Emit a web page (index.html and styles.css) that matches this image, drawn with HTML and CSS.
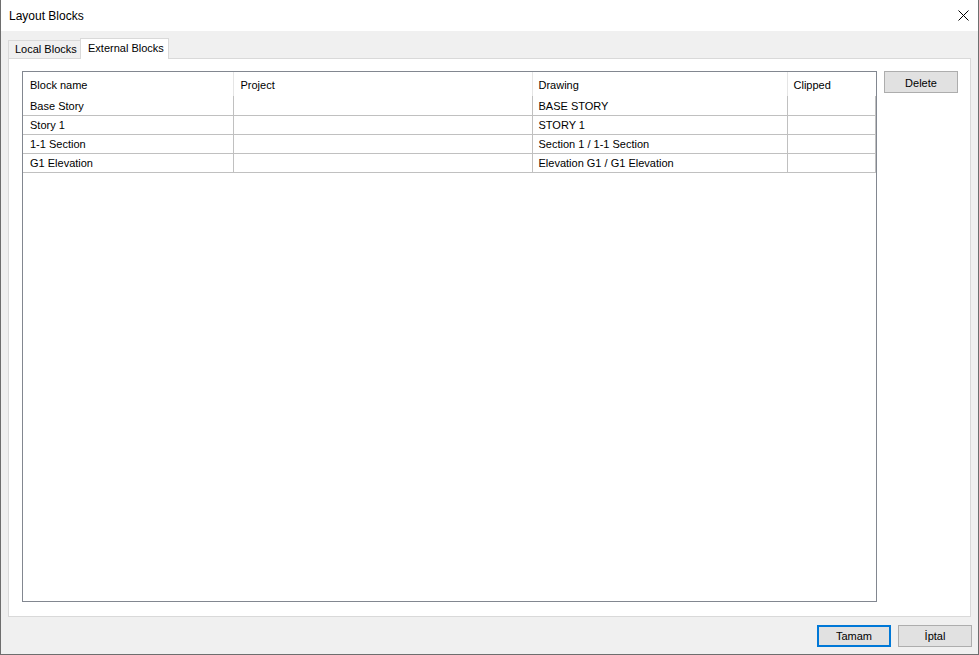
FILE: index.html
```
<!DOCTYPE html>
<html lang="en">
<head>
    <meta charset="UTF-8">
    <title>Layout Blocks</title>
    <link rel="stylesheet" href="styles.css">
</head>
<body>
<div class="dialog">
    <div class="titleBar">
        <span class="titleText">Layout Blocks</span>
        <svg class="closeIcon" width="11" height="11" viewBox="0 0 11 11">
            <path d="M0.5 0.5 L10.5 10.5 M10.5 0.5 L0.5 10.5" stroke="#000" stroke-width="1" fill="none"/>
        </svg>
    </div>
    <div class="dialogBody">
        <div class="tabStrip">
            <div class="tab tabLocal">Local Blocks</div>
            <div class="tab tabActive">External Blocks</div>
        </div>
        <div class="tabPage">
            <div class="listView">
                <table class="blockTable">
                    <colgroup>
                        <col class="colName">
                        <col class="colProject">
                        <col class="colDrawing">
                        <col class="colClipped">
                    </colgroup>
                    <thead>
                    <tr>
                        <th>Block name</th>
                        <th>Project</th>
                        <th>Drawing</th>
                        <th>Clipped</th>
                    </tr>
                    </thead>
                    <tbody>
                    <tr>
                        <td>Base Story</td>
                        <td></td>
                        <td>BASE STORY</td>
                        <td></td>
                    </tr>
                    <tr>
                        <td>Story 1</td>
                        <td></td>
                        <td>STORY 1</td>
                        <td></td>
                    </tr>
                    <tr>
                        <td>1-1 Section</td>
                        <td></td>
                        <td>Section 1 / 1-1 Section</td>
                        <td></td>
                    </tr>
                    <tr>
                        <td>G1 Elevation</td>
                        <td></td>
                        <td>Elevation G1 / G1 Elevation</td>
                        <td></td>
                    </tr>
                    </tbody>
                </table>
            </div>
            <div class="sideButtons">
                <button class="winButton">Delete</button>
            </div>
        </div>
        <div class="footer">
            <button class="winButton defaultButton">Tamam</button>
            <button class="winButton">İptal</button>
        </div>
    </div>
</div>
</body>
</html>
```

FILE: styles.css
```
* {
    box-sizing: border-box;
}

body {
    margin: 0;
    font-family: "Liberation Sans", Arial, sans-serif;
    font-size: 11px;
    color: #000;
}

.dialog {
    width: 979px;
    height: 655px;
    display: flex;
    flex-direction: column;
    border: 1px solid #6e6e6e;
    border-top: none;
    background-color: #f0f0f0;
}

.titleBar {
    height: 31px;
    flex: none;
    display: flex;
    align-items: center;
    justify-content: space-between;
    padding: 0 9px 0 8px;
    background-color: #fff;
}

.titleText {
    font-size: 12px;
}

.closeIcon {
    display: block;
}

.dialogBody {
    flex: 1;
    display: flex;
    flex-direction: column;
    padding: 7px 7px 7px 7px;
}

/* tabs */
.tabStrip {
    height: 20px;
    display: flex;
    align-items: flex-end;
}

.tab {
    height: 18px;
    padding: 2px 0 0 6px;
    border: 1px solid #d9d9d9;
    border-right: none;
    border-bottom: none;
    background-color: #f0f0f0;
    white-space: nowrap;
    overflow: hidden;
}

.tabLocal {
    width: 72px;
}

.tabActive {
    width: 89px;
    height: 21px;
    margin-bottom: -1px;
    padding: 3px 0 0 7px;
    border-right: 1px solid #d9d9d9;
    background-color: #fff;
    position: relative;
}

.tabPage {
    height: 559px;
    display: flex;
    align-items: flex-start;
    gap: 7px;
    padding: 12px 11px 14px 13px;
    border: 1px solid #d9d9d9;
    background-color: #fff;
}

/* list */
.listView {
    width: 855px;
    height: 531px;
    border: 1px solid #828790;
    background-color: #fff;
}

.blockTable {
    width: 852px;
    border-collapse: collapse;
    table-layout: fixed;
}

.colName { width: 210px; }
.colProject { width: 299px; }
.colDrawing { width: 255px; }
.colClipped { width: 88px; }

.blockTable th {
    height: 24px;
    padding: 1px 0 0 7px;
    font-weight: normal;
    text-align: left;
    border-left: 1px solid #e5e5e5;
}

.blockTable th:nth-child(3),
.blockTable th:nth-child(4) {
    padding-left: 6px;
}

.blockTable th:first-child {
    border-left: none;
}

.blockTable td {
    height: 19px;
    padding: 1px 0 0 6px;
    border-bottom: 1px solid #c0c0c0;
    border-right: 1px solid #c0c0c0;
    white-space: nowrap;
}

.blockTable td:first-child {
    padding-left: 7px;
}

/* buttons */
.winButton {
    width: 74px;
    height: 22px;
    padding: 1px 0 0 0;
    font-family: "Liberation Sans", Arial, sans-serif;
    font-size: 11px;
    color: #000;
    background-color: #e1e1e1;
    border: 1px solid #adadad;
    border-radius: 0;
}

.defaultButton {
    border: 2px solid #0078d7;
}

.footer {
    flex: none;
    display: flex;
    justify-content: flex-end;
    gap: 7px;
    margin-top: 8px;
    margin-right: -1px;
}

.footer .winButton {
    padding: 0;
}
```
